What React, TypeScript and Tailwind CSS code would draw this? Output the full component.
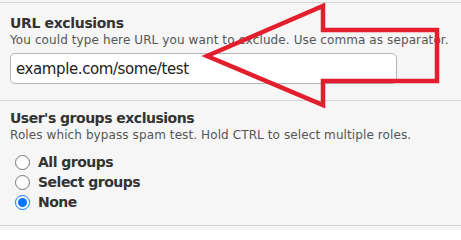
export default function App() {
  return (
    <div className="relative w-[461px] h-[230px] overflow-hidden bg-[#f6f6f6] font-['DejaVu_Sans',sans-serif] text-[#333]">
      <div className="h-[3px] border-b border-[#d4d4d4]" />
      <section className="px-[10px] pt-[11px] pb-[16px] border-b border-[#d4d4d4]">
        <h3 className="text-[14px] font-bold leading-[18px] tracking-[-0.35px]">URL exclusions</h3>
        <p className="text-[12px] leading-[16px] text-[#555] tracking-[0.1px] whitespace-nowrap">
          You could type here URL you want to exclude. Use comma as separator.
        </p>
        <input
          defaultValue="example.com/some/test"
          className="mt-[5px] block w-[387px] h-[31px] px-[5px] rounded-[5px] border border-[#b5b5b5] bg-white text-[15px] text-[#222] tracking-[-0.4px] outline-none"
        />
      </section>
      <section className="px-[10px] pt-[8px] pb-[13px] border-b border-[#d4d4d4]">
        <h3 className="text-[14px] font-bold leading-[18px] tracking-[-0.5px]">User&apos;s groups exclusions</h3>
        <p className="text-[12px] leading-[16px] text-[#555] tracking-[0.1px] whitespace-nowrap">
          Roles which bypass spam test. Hold CTRL to select multiple roles.
        </p>
        <div className="mt-[9px] flex flex-col">
          {["All groups", "Select groups", "None"].map((label) => (
            <label key={label} className="flex items-center h-[20px] gap-[8px] pl-[5px]">
              <input
                type="radio"
                name="groups"
                defaultChecked={label === "None"}
                className="m-0 w-[15px] h-[15px] accent-[#0075ff]"
              />
              <span className="text-[14px] font-bold text-[#333] tracking-[-0.5px]">{label}</span>
            </label>
          ))}
        </div>
      </section>
      <svg className="absolute left-0 top-0 pointer-events-none" width="461" height="230">
        <polygon
          points="207,56 323,6 323,30 437,30 437,81 323,81 323,105"
          fill="none"
          stroke="#e31e2d"
          strokeWidth="4.5"
          strokeLinejoin="miter"
        />
      </svg>
    </div>
  );
}
